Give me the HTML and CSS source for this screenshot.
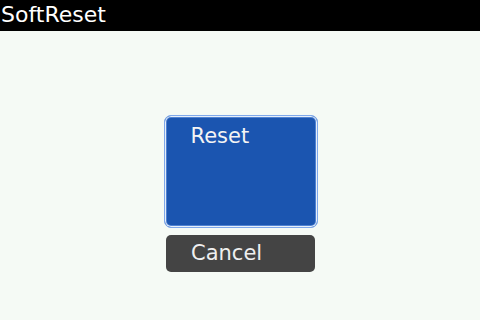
FILE: index.html
```html
<!DOCTYPE html>
<html>
<head>
<meta charset="utf-8">
<link rel="stylesheet" href="styles.css">
</head>
<body>
<div class="screen">
  <div class="titlebar">SoftReset</div>
  <div class="content">
    <div class="menu">
      <div class="btn btn-reset"><span class="label">Reset</span></div>
      <div class="btn btn-cancel"><span class="label">Cancel</span></div>
    </div>
  </div>
</div>
</body>
</html>
```

FILE: styles.css
```css
html, body {
  margin: 0;
  padding: 0;
  width: 480px;
  height: 320px;
  overflow: hidden;
  background: #f5faf5;
  font-family: "DejaVu Sans", sans-serif;
}
.screen {
  display: flex;
  flex-direction: column;
  width: 480px;
  height: 320px;
}
.titlebar {
  height: 31px;
  background: #000;
  color: #fff;
  font-size: 22px;
  line-height: 30px;
  padding-left: 1px;
  box-sizing: border-box;
}
.content {
  flex: 1;
  display: flex;
  justify-content: center;
  padding-top: 84px;
  padding-left: 1px;
}
.menu {
  display: flex;
  flex-direction: column;
  align-items: center;
  gap: 7px;
}
.btn {
  box-sizing: border-box;
  color: #f4f4f4;
  font-size: 21px;
  padding-left: 25px;
}
.btn-reset {
  width: 154px;
  height: 113px;
  background: #1b55b0;
  border-radius: 7px;
  border: 1px solid #7fa8ea;
  box-shadow: inset 0 0 0 1px #e6effa, inset 0 0 0 2px #4f82d2;
  padding-top: 7px;
  padding-left: 26px;
  line-height: 26px;
}
.btn-cancel {
  width: 149px;
  height: 37px;
  background: #444444;
  border-radius: 5px;
  line-height: 37px;
  color: #efefef;
}
```
